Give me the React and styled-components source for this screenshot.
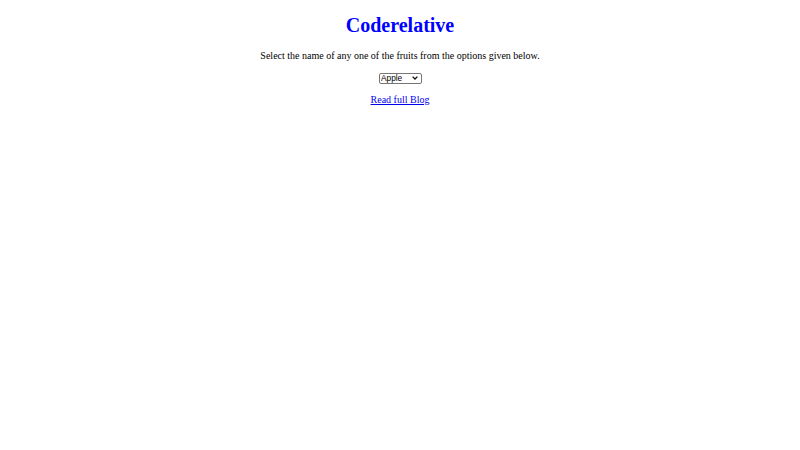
import React, { useState } from "react";
import styled, { createGlobalStyle } from "styled-components";

const GlobalStyle = createGlobalStyle`
  body {
    margin: 5px;
    background: #fff;
    font-family: "Liberation Serif", "Times New Roman", serif;
    font-size: 10px;
    color: #000;
  }
`;

const Page = styled.div`
  text-align: center;
`;

const Title = styled.h1`
  color: blue;
  font-size: 20px;
  font-weight: bold;
  margin: 9px 0 13.4px;
`;

const Text = styled.p`
  margin: 10px 0;
  font-size: 10px;
`;

const chevron = encodeURIComponent(
  '<svg xmlns="http://www.w3.org/2000/svg" width="6" height="4" viewBox="0 0 6 4"><path d="M0.6 0.6 L3 3 L5.4 0.6" fill="none" stroke="#111" stroke-width="1.3"/></svg>'
);

const FruitSelect = styled.select`
  appearance: none;
  -webkit-appearance: none;
  font-family: "Liberation Sans", Arial, sans-serif;
  font-size: 8.3px;
  line-height: 9px;
  width: 43px;
  height: 11px;
  padding: 0 0 0 1.5px;
  color: #000;
  border: 1px solid #767676;
  border-radius: 2px;
  background: #fff url("data:image/svg+xml,${chevron}") no-repeat right 3px center;
  background-size: 6px 4px;
  vertical-align: middle;
`;

const BlogLink = styled.a`
  color: #0000ee;
  text-decoration: underline;
`;

const fruits = ["Apple", "Mango", "Banana", "Orange"];

export default function App() {
  const [fruit, setFruit] = useState("Apple");

  return (
    <>
      <GlobalStyle />
      <Page>
        <Title>Coderelative</Title>
        <Text>Select the name of any one of the fruits from the options given below.</Text>
        <Text>
          <FruitSelect value={fruit} onChange={(e) => setFruit(e.target.value)}>
            {fruits.map((f) => (
              <option key={f} value={f}>
                {f}
              </option>
            ))}
          </FruitSelect>
        </Text>
        <Text>
          <BlogLink href="#">Read full Blog</BlogLink>
        </Text>
      </Page>
    </>
  );
}
